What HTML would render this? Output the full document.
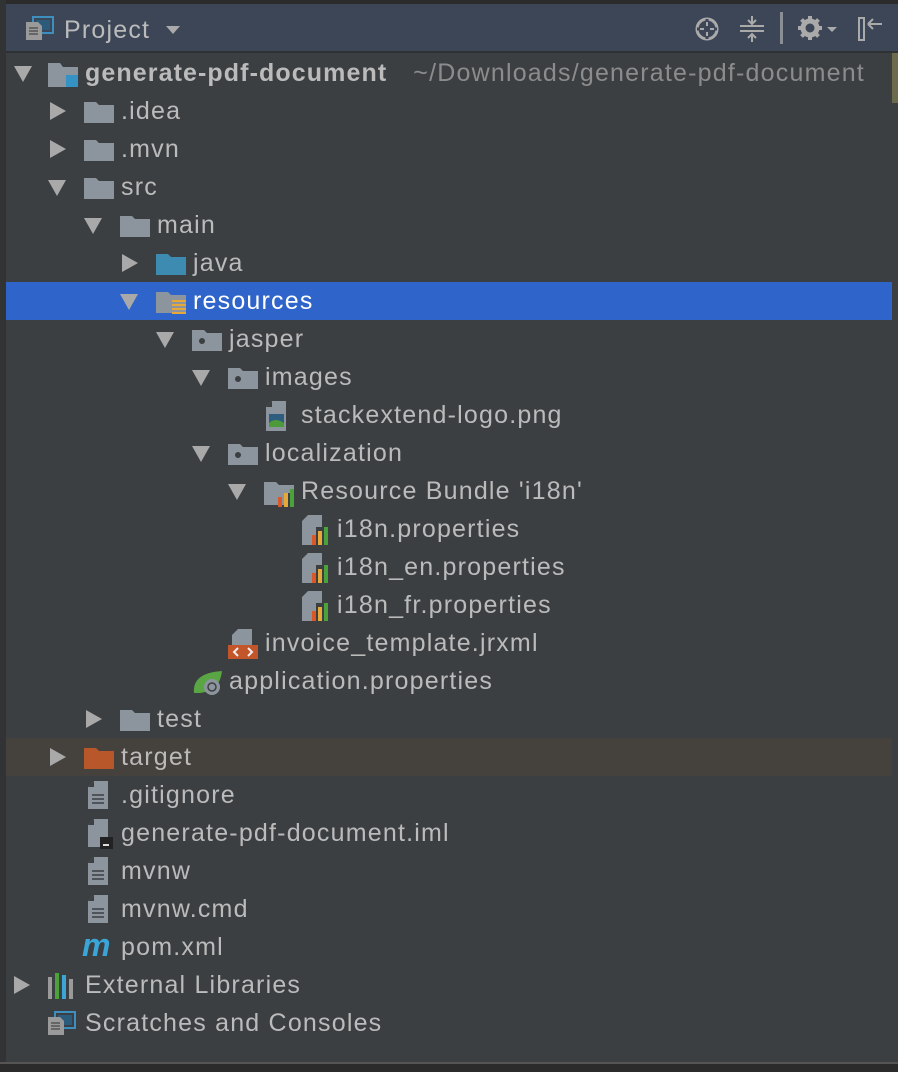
<!DOCTYPE html><html><head><style>
body{margin:0;width:898px;height:1070px;background:#3c3f41;overflow:hidden;font-family:"Liberation Sans",sans-serif;position:relative}
#top{position:absolute;left:0;top:0;width:898px;height:4px;background:#2b2b2b}
#lb{position:absolute;left:0;top:0;width:6px;height:1070px;background:#313335}
#hdr{position:absolute;left:6px;top:4px;width:892px;height:47px;background:#3c4656;border-bottom:2px solid #2f3133}
#bot{position:absolute;left:0;top:1062px;width:898px;height:8px;background:#2b2b2b;border-top:2px solid #555}
.r{position:absolute;left:6px;width:886px;height:38px}
.t{position:absolute;top:5px;font-size:25px;letter-spacing:1.2px;color:#bbb;white-space:nowrap;line-height:28px}
.a{position:absolute;top:11px;width:0;height:0}
.ad{border-left:9px solid transparent;border-right:9px solid transparent;border-top:16px solid #a9a9a9;top:12px}
.ar{border-top:9px solid transparent;border-bottom:9px solid transparent;border-left:16px solid #a9a9a9;top:10px}
svg.i{position:absolute;top:5px}
</style></head><body>
<div id="top"></div><div id="lb"></div>
<div id="hdr">
<svg style="position:absolute;left:20px;top:10px" width="36" height="28"><rect x="7" y="3" width="20" height="16" fill="none" stroke="#3d8fc0" stroke-width="2"/><rect x="10" y="6" width="14" height="10" fill="#2c5b7c"/><path d="M0 8h12l4 4v14H0z" fill="#9a9a9a"/><path d="M3 14h9M3 17h9M3 20h9" stroke="#555" stroke-width="1.5"/></svg>
<div class="t" style="left:58px;top:12px;color:#bbb">Project</div>
<div style="position:absolute;left:160px;top:22px;border-left:7px solid transparent;border-right:7px solid transparent;border-top:8px solid #aaa"></div>
<svg style="position:absolute;left:688px;top:12px" width="26" height="26"><circle cx="13" cy="13" r="10" fill="none" stroke="#aaa" stroke-width="3"/><path d="M13 3v6M13 17v6M3 13h6M17 13h6" stroke="#3c4656" stroke-width="3"/><path d="M13 6v4M13 16v4M6 13h4M16 13h4" stroke="#aaa" stroke-width="2"/></svg>
<svg style="position:absolute;left:734px;top:12px" width="24" height="26"><path d="M0 10h24M0 15h24" stroke="#aaa" stroke-width="2"/><path d="M12 0v7M8 4l4 4 4-4M12 26v-7M8 22l4-4 4 4" stroke="#aaa" stroke-width="2" fill="none"/></svg>
<div style="position:absolute;left:774px;top:8px;width:3px;height:32px;background:#8a8f96"></div>
<svg style="position:absolute;left:790px;top:10px" width="48" height="28"><circle cx="14" cy="14" r="7" fill="none" stroke="#aaa" stroke-width="5"/><path d="M14 2v6M14 20v6M2 14h6M20 14h6M5.5 5.5l4 4M18.5 18.5l4 4M5.5 22.5l4-4M18.5 9.5l4-4" stroke="#aaa" stroke-width="4"/><path d="M31 13l5 5 5-5z" fill="#aaa"/></svg>
<svg style="position:absolute;left:848px;top:12px" width="30" height="26"><rect x="5" y="2" width="5" height="22" fill="none" stroke="#aaa" stroke-width="2"/><path d="M14 8h14M14 8l5-5M14 8l5 5" stroke="#aaa" stroke-width="2" fill="none"/></svg>
</div>
<div style="position:absolute;left:892px;top:53px;width:6px;height:50px;background:#6b6a4c"></div>

<div class="r" style="top:54px"><div class="a ad" style="left:8px"></div>
<svg class="i" style="left:42px" width="34" height="28"><path d="M0 4h12l3 4h15v20H0z" fill="#8c959d"/><rect x="18" y="16" width="12" height="12" fill="#3592c4"/></svg>
<div class="t" style="left:79px;font-weight:bold;letter-spacing:1.1px">generate-pdf-document<span style="font-weight:normal;color:#8c8c8c;letter-spacing:1.2px;margin-left:26px">~/Downloads/generate-pdf-document</span></div></div>

<div class="r" style="top:92px"><div class="a ar" style="left:44px"></div><svg class="i" style="left:78px" width="30" height="28"><path d="M0 5h12l3 3h15v18H0z" fill="#8c959d"/></svg><div class="t" style="left:115px">.idea</div></div>
<div class="r" style="top:130px"><div class="a ar" style="left:44px"></div><svg class="i" style="left:78px" width="30" height="28"><path d="M0 5h12l3 3h15v18H0z" fill="#8c959d"/></svg><div class="t" style="left:115px">.mvn</div></div>
<div class="r" style="top:168px"><div class="a ad" style="left:42px"></div><svg class="i" style="left:78px" width="30" height="28"><path d="M0 5h12l3 3h15v18H0z" fill="#8c959d"/></svg><div class="t" style="left:115px">src</div></div>
<div class="r" style="top:206px"><div class="a ad" style="left:78px"></div><svg class="i" style="left:114px" width="30" height="28"><path d="M0 5h12l3 3h15v18H0z" fill="#8c959d"/></svg><div class="t" style="left:151px">main</div></div>
<div class="r" style="top:244px"><div class="a ar" style="left:116px"></div><svg class="i" style="left:150px" width="30" height="28"><path d="M0 5h12l3 3h15v18H0z" fill="#3d8bb0"/></svg><div class="t" style="left:187px">java</div></div>
<div class="r" style="top:282px;background:#2f65ca"><div class="a ad" style="left:114px"></div><svg class="i" style="left:150px" width="30" height="30"><path d="M0 5h12l3 3h15v18H0z" fill="#8c959d"/><path d="M16 14h14M16 18h14M16 22h14M16 26h14" stroke="#e5a839" stroke-width="2"/></svg><div class="t" style="left:187px;color:#fff">resources</div></div>
<div class="r" style="top:320px"><div class="a ad" style="left:150px"></div><svg class="i" style="left:186px" width="30" height="28"><path d="M0 5h12l3 3h15v18H0z" fill="#8c959d"/><circle cx="10" cy="16" r="3" fill="#3c3f41"/></svg><div class="t" style="left:223px">jasper</div></div>
<div class="r" style="top:358px"><div class="a ad" style="left:186px"></div><svg class="i" style="left:222px" width="30" height="28"><path d="M0 5h12l3 3h15v18H0z" fill="#8c959d"/><circle cx="10" cy="16" r="3" fill="#3c3f41"/></svg><div class="t" style="left:259px">images</div></div>
<div class="r" style="top:396px"><svg class="i" style="left:260px" width="24" height="30"><path d="M6 0h14v30H0V6z" fill="#8c959d"/><path d="M6 0v6H0z" fill="#3c3f41"/><rect x="3" y="13" width="15" height="13" fill="#2e5d80"/><path d="M3 22q6-6 15 0v4H3z" fill="#4c9a3a"/></svg><div class="t" style="left:295px">stackextend-logo.png</div></div>
<div class="r" style="top:434px"><div class="a ad" style="left:186px"></div><svg class="i" style="left:222px" width="30" height="28"><path d="M0 5h12l3 3h15v18H0z" fill="#8c959d"/><circle cx="10" cy="16" r="3" fill="#3c3f41"/></svg><div class="t" style="left:259px">localization</div></div>
<div class="r" style="top:472px"><div class="a ad" style="left:222px"></div><svg class="i" style="left:258px" width="32" height="30"><path d="M0 5h12l3 3h15v8H24v12H0z" fill="#8c959d"/><rect x="14" y="20" width="4" height="10" fill="#d9582a"/><rect x="20" y="16" width="4" height="14" fill="#e5a839"/><rect x="26" y="12" width="4" height="18" fill="#4ba23a"/></svg><div class="t" style="left:295px">Resource Bundle 'i18n'</div></div>
<div class="r" style="top:510px"><svg class="i" style="left:296px" width="28" height="30"><path d="M6 0h14v12H14v18H0V6z" fill="#8c959d"/><rect x="10" y="20" width="4" height="10" fill="#d9582a"/><rect x="16" y="16" width="4" height="14" fill="#e5a839"/><rect x="22" y="12" width="4" height="18" fill="#4ba23a"/></svg><div class="t" style="left:331px">i18n.properties</div></div>
<div class="r" style="top:548px"><svg class="i" style="left:296px" width="28" height="30"><path d="M6 0h14v12H14v18H0V6z" fill="#8c959d"/><rect x="10" y="20" width="4" height="10" fill="#d9582a"/><rect x="16" y="16" width="4" height="14" fill="#e5a839"/><rect x="22" y="12" width="4" height="18" fill="#4ba23a"/></svg><div class="t" style="left:331px">i18n_en.properties</div></div>
<div class="r" style="top:586px"><svg class="i" style="left:296px" width="28" height="30"><path d="M6 0h14v12H14v18H0V6z" fill="#8c959d"/><rect x="10" y="20" width="4" height="10" fill="#d9582a"/><rect x="16" y="16" width="4" height="14" fill="#e5a839"/><rect x="22" y="12" width="4" height="18" fill="#4ba23a"/></svg><div class="t" style="left:331px">i18n_fr.properties</div></div>
<div class="r" style="top:624px"><svg class="i" style="left:222px" width="32" height="30"><path d="M10 0h14v16H4V6z" fill="#8c959d"/><rect x="0" y="16" width="30" height="14" fill="#c2552a"/><path d="M10 19l-4 4 4 4M20 19l4 4-4 4" stroke="#eee" stroke-width="2" fill="none"/></svg><div class="t" style="left:259px">invoice_template.jrxml</div></div>
<div class="r" style="top:662px"><svg class="i" style="left:186px" width="32" height="30"><path d="M2 26q-2-20 28-22q-2 20-22 22z" fill="#5aa544"/><circle cx="20" cy="20" r="8" fill="#8c959d"/><circle cx="20" cy="20" r="4" fill="none" stroke="#3c3f41" stroke-width="1.5"/></svg><div class="t" style="left:223px">application.properties</div></div>
<div class="r" style="top:700px"><div class="a ar" style="left:80px"></div><svg class="i" style="left:114px" width="30" height="28"><path d="M0 5h12l3 3h15v18H0z" fill="#8c959d"/></svg><div class="t" style="left:151px">test</div></div>
<div class="r" style="top:738px;background:#45423d"><div class="a ar" style="left:44px"></div><svg class="i" style="left:78px" width="30" height="28"><path d="M0 5h12l3 3h15v18H0z" fill="#b8582a"/></svg><div class="t" style="left:115px">target</div></div>
<div class="r" style="top:776px"><svg class="i" style="left:82px" width="22" height="30"><path d="M6 0h14v28H0V6z" fill="#8c959d"/><path d="M6 0v6H0z" fill="#3c3f41"/><path d="M4 14h12M4 18h12M4 22h12" stroke="#3c3f41" stroke-width="1.5"/></svg><div class="t" style="left:115px">.gitignore</div></div>
<div class="r" style="top:814px"><svg class="i" style="left:82px" width="28" height="30"><path d="M6 0h14v28H0V6z" fill="#8c959d"/><path d="M6 0v6H0z" fill="#3c3f41"/><rect x="12" y="18" width="13" height="12" fill="#222"/><path d="M15 26h6" stroke="#ddd" stroke-width="2"/></svg><div class="t" style="left:115px">generate-pdf-document.iml</div></div>
<div class="r" style="top:852px"><svg class="i" style="left:82px" width="22" height="30"><path d="M6 0h14v28H0V6z" fill="#8c959d"/><path d="M6 0v6H0z" fill="#3c3f41"/><path d="M4 14h12M4 18h12M4 22h12" stroke="#3c3f41" stroke-width="1.5"/></svg><div class="t" style="left:115px">mvnw</div></div>
<div class="r" style="top:890px"><svg class="i" style="left:82px" width="22" height="30"><path d="M6 0h14v28H0V6z" fill="#8c959d"/><path d="M6 0v6H0z" fill="#3c3f41"/><path d="M4 14h12M4 18h12M4 22h12" stroke="#3c3f41" stroke-width="1.5"/></svg><div class="t" style="left:115px">mvnw.cmd</div></div>
<div class="r" style="top:928px"><div class="t" style="left:76px;color:#3aa5d6;font-style:italic;font-weight:bold;font-size:32px;top:3px;letter-spacing:0">m</div><div class="t" style="left:115px">pom.xml</div></div>
<div class="r" style="top:966px"><div class="a ar" style="left:8px"></div><svg class="i" style="left:42px" width="30" height="30"><rect x="0" y="6" width="4" height="22" fill="#9a9a9a"/><rect x="7" y="2" width="4" height="26" fill="#4ba23a"/><rect x="14" y="4" width="4" height="24" fill="#3aa5d6"/><rect x="21" y="8" width="4" height="20" fill="#9a9a9a"/></svg><div class="t" style="left:79px">External Libraries</div></div>
<div class="r" style="top:1004px"><svg class="i" style="left:42px" width="32" height="30"><rect x="7" y="3" width="20" height="16" fill="none" stroke="#3d8fc0" stroke-width="2"/><rect x="10" y="6" width="14" height="10" fill="#2c5b7c"/><path d="M0 8h12l4 4v14H0z" fill="#9a9a9a"/><path d="M3 14h9M3 17h9M3 20h9" stroke="#555" stroke-width="1.5"/></svg><div class="t" style="left:79px">Scratches and Consoles</div></div>
<div id="bot"></div>
</body></html>
